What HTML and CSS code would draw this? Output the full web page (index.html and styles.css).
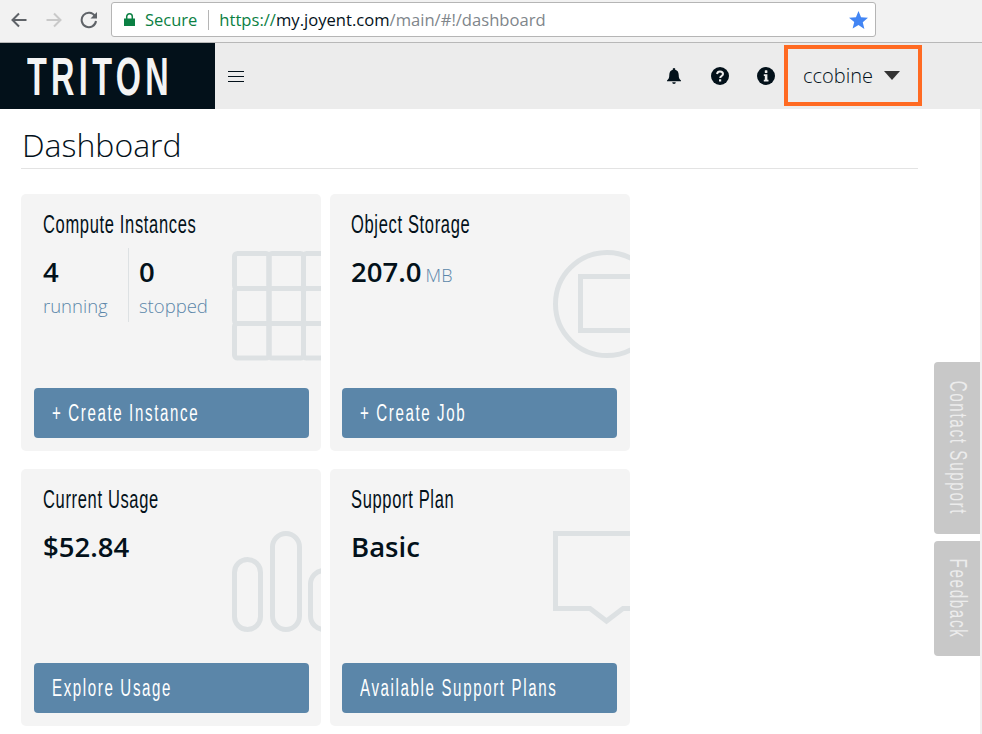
FILE: index.html
```html
<!DOCTYPE html>
<html lang="en">
<head>
<meta charset="utf-8">
<title>Dashboard</title>
<link rel="stylesheet" href="styles.css">
</head>
<body>
<div class="browser">
  <div class="nav-icons">
    <svg class="nav-icon" viewBox="0 0 18 18"><path d="M16.5 9H2.5M9 2.500 2.500 9 9 15.500" fill="none" stroke="#5f6368" stroke-width="2"/></svg>
    <svg class="nav-icon" viewBox="0 0 18 18"><path d="M1.500 9h14M9 2.500 15.500 9 9 15.500" fill="none" stroke="#c9c9c9" stroke-width="2"/></svg>
    <svg class="nav-icon" viewBox="0 0 18 18"><path d="M15 5.200A7.200 7.200 0 1 0 16 10" fill="none" stroke="#5f6368" stroke-width="2"/><path d="M17 1v6.500h-6.500z" fill="#5f6368"/></svg>
  </div>
  <div class="address">
    <svg class="lock" viewBox="0 0 11 13"><path d="M0 5.500h11V13H0z" fill="#0b8043"/><path d="M2.700 6V3.600a2.800 2.800 0 0 1 5.600 0V6" fill="none" stroke="#0b8043" stroke-width="1.500"/></svg>
    <span class="secure">Secure</span>
    <span class="sep"></span>
    <span class="url"><span class="scheme">https://</span><span class="host">my.joyent.com</span>/main/#!/dashboard</span>
    <svg class="star" viewBox="0 0 20 19"><path d="M10 0l2.700 6.600 7.300.6-5.500 4.700 1.700 7.100L10 14.800 3.800 18.600l1.700-7.100L0 7.200l7.300-.6z" fill="#4285f4"/></svg>
  </div>
</div>
<header class="topbar">
  <div class="logo"><span class="logo-text">TRITON</span></div>
  <div class="burger"><span></span><span></span><span></span></div>
  <div class="top-actions">
    <svg class="top-icon" viewBox="0 0 18 18"><path d="M9 1a1.300 1.300 0 0 1 1.200 1.700C12.600 3.300 13.700 5.200 13.700 8c0 3 .8 4.300 2.300 5.500v.8H2v-.8C3.500 12.300 4.300 11 4.300 8c0-2.800 1.100-4.700 3.500-5.300A1.300 1.300 0 0 1 9 1zM7.200 15.200h3.600A1.800 1.800 0 0 1 9 17a1.800 1.800 0 0 1-1.800-1.800z" fill="#03111a"/></svg>
    <svg class="top-icon" viewBox="0 0 18 18"><circle cx="9" cy="9" r="9" fill="#03111a"/><path d="M6 7a3 3 0 0 1 3-2.500c1.800 0 3 1.100 3 2.500 0 2-2.800 2-2.800 4" fill="none" stroke="#ececec" stroke-width="2"/><rect x="8" y="12.300" width="2.200" height="2.200" fill="#ececec"/></svg>
    <svg class="top-icon" viewBox="0 0 18 18"><circle cx="9" cy="9" r="9" fill="#03111a"/><rect x="7.800" y="3.300" width="2.600" height="2.600" rx=".5" fill="#ececec"/><path d="M6.800 7.200h3.600v5.600h1.100v1.700H6.800v-1.700h1V8.900h-1z" fill="#ececec"/></svg>
    <div class="user"><span class="user-name">ccobine</span><span class="caret"></span></div>
  </div>
</header>
<main class="content">
  <h1 class="page-title">Dashboard</h1>
  <div class="cards">
    <section class="card">
      <svg class="card-art" viewBox="0 0 300 257"><g fill="none" stroke="#dde1e3" stroke-width="5" stroke-linejoin="round"><rect x="213.500" y="59.500" width="34.500" height="35" rx="3"/><rect x="248" y="59.500" width="34.500" height="35" rx="3"/><rect x="282.500" y="59.500" width="34.500" height="35" rx="3"/><rect x="213.500" y="94.500" width="34.500" height="35" rx="3"/><rect x="248" y="94.500" width="34.500" height="35" rx="3"/><rect x="282.500" y="94.500" width="34.500" height="35" rx="3"/><rect x="213.500" y="129.500" width="34.500" height="34.500" rx="3"/><rect x="248" y="129.500" width="34.500" height="34.500" rx="3"/><rect x="282.500" y="129.500" width="34.500" height="34.500" rx="3"/></g></svg>
      <h2 class="card-title"><span class="cond">Compute Instances</span></h2>
      <div class="stats">
        <div class="stat"><div class="value">4</div><div class="label">running</div></div>
        <div class="stat stat-second"><div class="value">0</div><div class="label">stopped</div></div>
      </div>
      <a class="card-btn"><span class="btn-text">+ Create Instance</span></a>
    </section>
    <section class="card card-right">
      <svg class="card-art" viewBox="0 0 300 257"><g fill="none" stroke="#dde1e3" stroke-width="5"><circle cx="277" cy="110" r="51.500"/><rect x="250.500" y="82.500" width="80" height="54"/></g></svg>
      <h2 class="card-title"><span class="cond">Object Storage</span></h2>
      <div class="single"><span class="value">207.0</span> <span class="unit">MB</span></div>
      <a class="card-btn"><span class="btn-text">+ Create Job</span></a>
    </section>
    <section class="card">
      <svg class="card-art" viewBox="0 0 300 257"><g fill="none" stroke="#dde1e3" stroke-width="5"><rect x="213.500" y="90.500" width="26" height="70" rx="13"/><rect x="251.500" y="64.500" width="27" height="96" rx="13.500"/><rect x="289.500" y="101.500" width="27" height="59" rx="13.500"/></g></svg>
      <h2 class="card-title"><span class="cond">Current Usage</span></h2>
      <div class="single"><span class="value">$52.84</span></div>
      <a class="card-btn"><span class="btn-text">Explore Usage</span></a>
    </section>
    <section class="card card-right">
      <svg class="card-art" viewBox="0 0 300 257"><path d="M310 64.500H225.500V139.500H260L276.500 152 293 139.500H310" fill="none" stroke="#dde1e3" stroke-width="5"/></svg>
      <h2 class="card-title"><span class="cond">Support Plan</span></h2>
      <div class="single"><span class="value">Basic</span></div>
      <a class="card-btn"><span class="btn-text">Available Support Plans</span></a>
    </section>
  </div>
</main>
<aside class="side-tabs">
  <a class="side-tab side-contact"><span class="side-text">Contact Support</span></a>
  <a class="side-tab side-feedback"><span class="side-text">Feedback</span></a>
</aside>
</body>
</html>
```
FILE: styles.css
```css
* { box-sizing: border-box; }
html, body { margin: 0; height: 734px; overflow: hidden; background: #fff; }
body { font-family: "Open Sans", "Liberation Sans", sans-serif; color: #03111a; position: relative; }

.browser { height: 43px; background: #f2f2f2; border-bottom: 1px solid #b8b8b8; display: flex; align-items: flex-start; padding: 2px 106px 0 0; }
.nav-icons { width: 111px; height: 35px; display: flex; align-items: center; gap: 17px; padding-left: 10px; flex: none; }
.nav-icon { width: 18px; height: 18px; flex: none; }
.address { flex: 1; height: 35px; background: #fff; border: 1px solid #b5b5b5; border-radius: 3px; display: flex; align-items: center; padding: 0 7px 0 12px; font-size: 16.500px; }
.lock { width: 11px; height: 13px; flex: none; }
.secure { color: #0b8043; margin-left: 10px; }
.sep { width: 1px; height: 20px; background: #b5b5b5; margin: 0 10px 0 11px; }
.url { color: #80868b; flex: 1; white-space: nowrap; font-size: 16.600px; }
.scheme { color: #0b8043; }
.host { color: #03111a; }
.star { width: 19px; height: 18px; flex: none; }

.topbar { height: 66px; background: #ececec; display: flex; align-items: center; }
.logo { width: 215px; height: 66px; background: #03111a; display: flex; align-items: center; padding-left: 27px; flex: none; overflow: hidden; }
.logo-text { font-family: "Liberation Sans", sans-serif; font-weight: 700; font-size: 54px; color: #f4f4f4; letter-spacing: 7.200px; line-height: 1; display: inline-block; transform-origin: left center; transform: scaleX(.6); white-space: nowrap; }
.burger { margin-left: 13px; width: 16px; display: flex; flex-direction: column; gap: 4px; }
.burger span { display: block; height: 1px; background: #03111a; }
.top-actions { margin-left: auto; margin-right: 60px; display: flex; align-items: center; }
.top-icon { width: 18px; height: 18px; margin-right: 28px; flex: none; }
.top-actions .top-icon:nth-child(3) { margin-right: 9px; }
.user { width: 138px; height: 61px; margin-bottom: 1px; border: 4px solid #ff6a22; display: flex; align-items: center; padding-left: 15px; font-size: 20px; font-weight: 300; line-height: 27px; }
.user-name { width: 81px; margin-bottom: 1px; }
.caret { width: 0; height: 0; border-left: 8px solid transparent; border-right: 8px solid transparent; border-top: 9px solid #333; }

.content { height: 625px; border-right: 2px solid #f1f1f1; padding: 0 0 0 21px; }
.page-title { margin: 0; width: 897px; height: 60px; border-bottom: 1px solid #e3e3e3; font-size: 32px; font-weight: 300; line-height: 44px; padding: 14px 0 0 1px; }
.cards { margin-top: 25px; display: grid; grid-template-columns: 300px 300px; grid-template-rows: 257px 257px; gap: 18px 9px; }
.card { position: relative; background: #f4f4f4; border-radius: 5px; overflow: hidden; padding: 15px 12px 13px 13px; display: flex; flex-direction: column; }
.card-right { padding: 15px 13px 13px 12px; }
.card-art { position: absolute; left: 0; top: 0; width: 300px; height: 257px; }
.card-title { position: relative; margin: 0 0 0 9px; font-family: "Liberation Sans", sans-serif; font-size: 25px; font-weight: 400; line-height: 30px; letter-spacing: 1px; white-space: nowrap; }
.cond { display: inline-block; transform-origin: left center; transform: scaleX(.66); }
.stats { position: relative; display: flex; margin: 9px 0 0 9px; }
.stat { height: 74px; width: 85px; padding-top: 6px; }
.stat-second { border-left: 1px solid #dde1e3; padding-left: 10px; width: 100px; }
.value { font-size: 27.500px; font-weight: 600; line-height: 36px; }
.label { font-size: 18.500px; font-weight: 300; line-height: 32px; color: #5b86a9; }
.single { position: relative; margin: 15px 0 0 9px; line-height: 38px; }
.unit { font-size: 18px; font-weight: 300; color: #5b86a9; }
.card-btn { position: relative; margin-top: auto; height: 50px; background: #5b86a9; border-radius: 4px; color: #fff; display: flex; align-items: center; padding-left: 18px; font-family: "Liberation Sans", sans-serif; font-size: 23px; letter-spacing: 2.500px; overflow: hidden; }
.btn-text { display: inline-block; white-space: nowrap; transform-origin: left center; transform: scaleX(.655); }

.side-tabs { position: absolute; left: 934px; top: 362px; width: 46px; display: flex; flex-direction: column; gap: 7px; }
.side-tab { background: #c8c8c8; border-radius: 4px 0 0 4px; color: #ececec; display: flex; align-items: center; justify-content: center; writing-mode: vertical-rl; overflow: hidden; font-family: "Liberation Sans", sans-serif; font-size: 23px; letter-spacing: 2.500px; }
.side-text { display: inline-block; white-space: nowrap; flex: none; transform: scaleY(.66); }
.side-contact { height: 172px; }
.side-feedback { height: 115px; }
```
